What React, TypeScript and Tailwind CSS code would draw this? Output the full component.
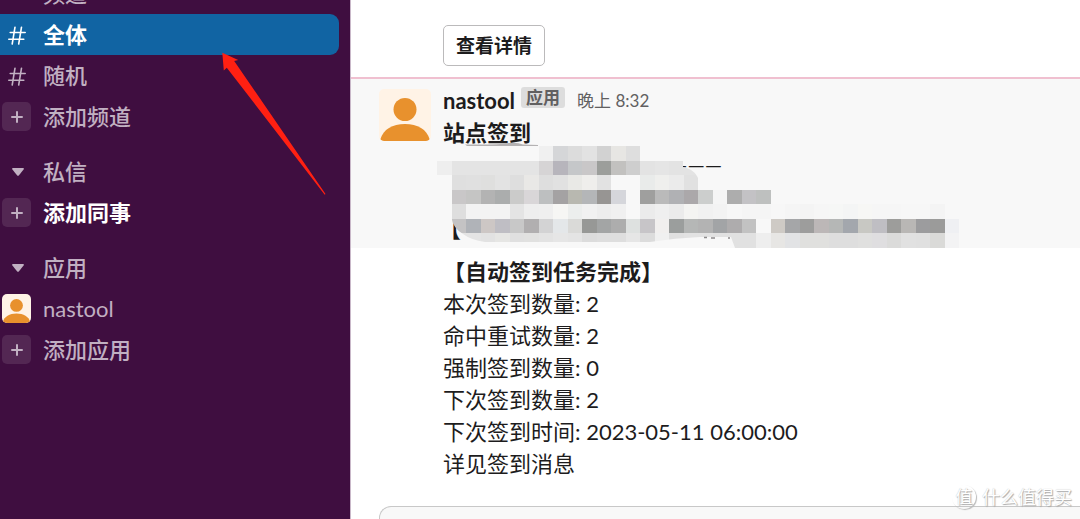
import type { ReactNode } from "react";

const CELL = 14.5;

// One entry per mosaic row: the first column index and the cell colours.
const MOSAIC: { start: number; cells: string[] }[] = [
  { start: 7, cells: ["f0f0f0", "d5d6d8", "dcdcdc", "e2e2e2", "d2d2d2", "e7e6e3", "dedede"] },
  {
    start: 0,
    cells: [
      "eeeeee", "e4e4e4", "e4e4e4", "e4e4e4", "e4e4e4", "e4e4e4", "e4e4e4", "d6d4d5", "b7b5bc",
      "c5c7c9", "c9c7c8", "9c9e9b", "c2c1bf", "cecece", "e3e3e3", "e5e5e5", "e3e3e3", "e3e3e3",
    ],
  },
  {
    start: 1,
    cells: [
      "dfdfdf", "e0e0e0", "dfdfde", "e3e3e3", "dedede", "e9e8e6", "dedede", "e1e1e1", "e9e9e6",
      "efeeec", "e2e2e2", "f8f8f8", "f8f8f8", "e9ebea", "efefed", "ebebeb", "e1e1e1",
    ],
  },
  {
    start: 1,
    cells: [
      "c9c7c8", "c5c5c4", "b3b3b3", "abadad", "cbcbca", "d9d6d8", "bdbfc0", "a4a2a3", "b8b8b0",
      "b4b6b8", "979593", "d5d6db", "f8f8f8", "9f9f9e", "bababa", "b0b1b4", "aba8aa", "cccecd",
      "f5f5f5", "adadad", "c3c2c5", "bec0bf",
    ],
  },
  {
    start: 1,
    cells: [
      "dedede", "f3f3f3", "f3f3f3", "f3f3f3", "e4e4e4", "eeeeee", "efefef", "f6f6f4", "eceeed",
      "f1f1f1", "ededed", "f0f0f0", "f8f8f8", "ebebeb", "efefef", "ebebeb", "f4f4f2", "f1f1f1",
      "f3f3f3", "f7f7f7", "f5f5f5", "f5f5f5", "f7f7f7", "f5f5f5", "f4f4f4", "f6f6f6", "f6f7f6",
      "f4f5f5", "f7f7f5", "f6f6f6", "f6f6f6", "f7f7f7", "f7f7f7", "f4f4f4",
    ],
  },
  {
    start: 1,
    cells: [
      "c4c3c4", "b0b3b8", "cdc7c5", "bfbec4", "c8c8c8", "b1afb0", "d3d3d4", "e4e7e9", "dadad8",
      "979896", "a3a5a5", "adadad", "dee1e0", "c7c5c8", "f1efee", "9b9e9d", "b5b7b6", "b3b3b3",
      "a2a4a6", "aeacad", "c2c2c2", "f8f8f8", "cecac5", "a5a6a8", "9d9d9c", "bcb7b7", "b5b7b6",
      "a3a7ad", "c8c8c3", "bfbec3", "9d9d9b", "b9b7b5", "9c9c9e", "9b9b9a", "eff0f3",
    ],
  },
  {
    start: 1,
    cells: [
      "e3e3e3", "e4e4e4", "e2e2e2", "e6e6e4", "e0e0e0", "e1e1e0", "e3e3e3", "e6e6e6", "e4e4e4",
      "dcdcdc", "dedede", "dedede", "e6e6e6", "dcdcdc", "f0f0f0", "e0e0e0", "e2e2e2", "e2e2e2",
      "e1e1e1", "e1e1e1", "e1e1e1", "eeeeee", "e7e6e4", "e2e3e5", "e0e0de", "e0e0de", "dedede",
      "dedede", "e0e0df", "dfdee0", "dbdbda", "e1e1e1", "e0e0e0", "dadad8", "f3f3f4",
    ],
  },
];

function Mosaic() {
  return (
    <svg
      className="pointer-events-none absolute -left-[6px] top-[57px]"
      width="540"
      height="106"
      viewBox="0 -4 540 106"
      aria-hidden="true"
    >
      <defs>
        <clipPath id="smear">
          <path d="M0 14.5H101V0H204V14.5H246V21Q260 24 262 36V41H334V58H523V102H298L294 91H263Q238 92 213 96H48Q34 94 26 88Q16 82 14.500 72V29H0Z" />
        </clipPath>
      </defs>
      <path d="M28-1.500Q60-1 72-3Q80-4 86-1.500L101-1V0H30Z" fill="#b4b2b3" />
      <g clipPath="url(#smear)" shapeRendering="crispEdges">
        {MOSAIC.map((row, r) =>
          row.cells.map((color, c) => (
            <rect
              key={`${r}-${c}`}
              x={(row.start + c) * CELL}
              y={r * CELL}
              width={CELL}
              height={CELL}
              fill={`#${color}`}
            />
          )),
        )}
      </g>
      <path d="M267 91.500h3M274 92h4M291 92h2" stroke="#8d8b8c" strokeWidth="1.500" />
    </svg>
  );
}

function Avatar({ className }: { className: string }) {
  return (
    <svg className={className} viewBox="0 0 52 52" aria-hidden="true">
      <rect width="52" height="52" fill="#fff3e6" />
      <circle cx="26" cy="20.500" r="11.500" fill="#e8912d" />
      <path d="M1.500 50C4 40.500 13.500 35 26 35s22 5.500 24.500 15q.300 2-1.500 2H3q-1.800 0-1.500-2Z" fill="#e8912d" />
    </svg>
  );
}

function Hash() {
  return (
    <svg className="size-5" viewBox="0 0 20 20" fill="none" stroke="currentColor" strokeWidth="1.600" strokeLinecap="round" aria-hidden="true">
      <path d="M3.200 7.500h15M1.800 14.200h15M8 2.200 5.200 19M14.500 2.200 11.700 19" />
    </svg>
  );
}

function Caret() {
  return (
    <svg className="ml-0.5 h-2 w-3" viewBox="0 0 12 8" fill="currentColor" aria-hidden="true">
      <path d="M1 0h10q1.500.200.600 1.600L7 7.300q-1 1-2 0L.400 1.600Q-.500.200 1 0Z" />
    </svg>
  );
}

function PlusBox() {
  return (
    <span className="flex size-[29px] items-center justify-center rounded-[5px] bg-[#532753]">
      <svg className="size-3" viewBox="0 0 12 12" stroke="currentColor" strokeWidth="2" strokeLinecap="round" aria-hidden="true">
        <path d="M6 1v10M1 6h10" />
      </svg>
    </span>
  );
}

type RowProps = {
  icon: ReactNode;
  children: ReactNode;
  className?: string;
};

function RowContent({ icon, children }: RowProps) {
  return (
    <>
      <span className="flex w-[29px] shrink-0 justify-center">{icon}</span>
      <span>{children}</span>
    </>
  );
}

const rowClass = "flex h-[41px] w-full items-center gap-3 pl-0.5 text-left";

function LinkRow({ icon, children, className = "" }: RowProps) {
  return (
    <a href="#" className={`${rowClass} ${className}`}>
      <RowContent icon={icon}>{children}</RowContent>
    </a>
  );
}

function ButtonRow({ icon, children, className = "" }: RowProps) {
  return (
    <button type="button" className={`${rowClass} ${className}`}>
      <RowContent icon={icon}>{children}</RowContent>
    </button>
  );
}

function Sidebar() {
  return (
    <nav
      className="w-[351px] shrink-0 overflow-hidden border-r border-[#c9b8c9] bg-[#3f0e40] text-[22px] font-medium text-[#c1b0c2]"
      aria-label="频道"
    >
      <div className="-mt-[27px] flex flex-col gap-[14px] pr-[11px]">
        <div>
          <ButtonRow icon={<Caret />}>频道</ButtonRow>
          <LinkRow icon={<Hash />} className="rounded-r-[9px] bg-[#1164a3] font-bold text-white">
            全体
          </LinkRow>
          <LinkRow icon={<Hash />}>随机</LinkRow>
          <ButtonRow icon={<PlusBox />}>添加频道</ButtonRow>
        </div>
        <div>
          <ButtonRow icon={<Caret />}>私信</ButtonRow>
          <ButtonRow icon={<PlusBox />}>
            <span className="font-bold text-white">添加同事</span>
          </ButtonRow>
        </div>
        <div>
          <ButtonRow icon={<Caret />}>应用</ButtonRow>
          <LinkRow icon={<Avatar className="size-[29px] rounded-[5px]" />} className="font-normal">
            nastool
          </LinkRow>
          <ButtonRow icon={<PlusBox />}>添加应用</ButtonRow>
        </div>
      </div>
    </nav>
  );
}

function Pointer() {
  return (
    <svg className="pointer-events-none absolute left-[220px] top-[50px]" width="108" height="148" viewBox="0 0 108 148" aria-hidden="true">
      <path d="M2.300 2.700 18.200 10l-4 1 91.300 133-.800.700L6.800 17.700l-3 2.800Z" fill="#ff2012" />
    </svg>
  );
}

const RESULT_LINES = [
  "本次签到数量: 2",
  "命中重试数量: 2",
  "强制签到数量: 0",
  "下次签到数量: 2",
  "下次签到时间: 2023-05-11 06:00:00",
  "详见签到消息",
];

export default function App() {
  return (
    <div className="relative flex h-screen overflow-hidden bg-white font-['Lato','Noto_Sans_CJK_SC',sans-serif] text-[#1d1c1d]">
      <Sidebar />
      <Pointer />
      <main className="flex min-w-0 flex-1 flex-col text-[22px] leading-8">
        <div className="pb-[11px] pl-[92px] pt-[25px]">
          <button
            type="button"
            className="flex h-[41px] items-center rounded-[5px] border border-[#bbbabb] bg-white px-3 text-[19px] font-bold"
          >
            查看详情
          </button>
        </div>

        <article className="flex gap-3 border-t-2 border-[#f0c0d0] bg-[#f8f8f8] pb-[3px] pl-7 pt-1.5">
          <Avatar className="mt-1 size-[52px] shrink-0 rounded-[5px]" />
          <div className="relative min-w-0 flex-1">
            <header className="flex h-8 items-center">
              <a href="#" className="font-bold">nastool</a>
              <span className="mb-2 ml-1.5 rounded-[3px] bg-[#dddddd] px-[5px] text-[17px] font-bold leading-[21px] text-[#616061]">
                应用
              </span>
              <time className="ml-3 text-[17px] text-[#616061]">晚上 8:32</time>
            </header>
            <p className="font-bold">站点签到</p>
            <p>————————————————</p>
            <p className="h-8" />
            <p className="-ml-1 font-bold">【</p>
            <Mosaic />
          </div>
        </article>

        <article className="pl-[92px] pt-2">
          <p className="font-bold">【自动签到任务完成】</p>
          {RESULT_LINES.map((line) => (
            <p key={line}>{line}</p>
          ))}
        </article>

        <div className="mt-[26px] min-h-0 flex-1 pl-7">
          <textarea
            aria-label="消息"
            className="block h-20 w-full resize-none rounded-tl-xl border border-r-0 border-[#c8c8c8] bg-[#f8f8f8] px-3 outline-none"
          />
        </div>
      </main>

      <div className="absolute bottom-[10px] right-2 flex items-center gap-1.5 text-[18px] leading-6 text-white [text-shadow:1px_1px_1px_#aaaaaa,0_0_1px_#bbbbbb]">
        <span className="flex size-6 items-center justify-center rounded-full text-[17px] shadow-[1px_1px_1px_#bbbbbb]">
          值
        </span>
        <span>什么值得买</span>
      </div>
    </div>
  );
}
